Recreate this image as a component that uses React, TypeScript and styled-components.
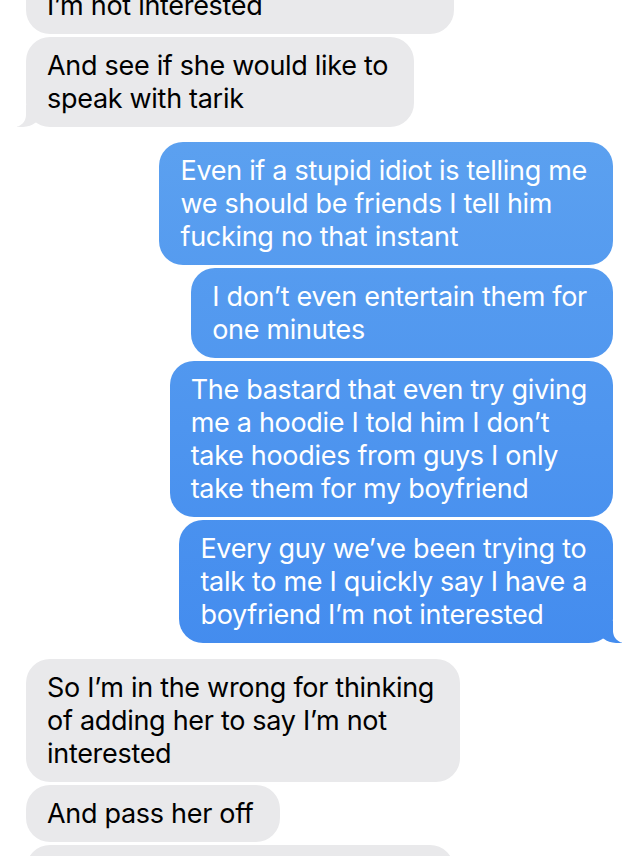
import React from "react";
import styled, { createGlobalStyle, css } from "styled-components";

const Global = createGlobalStyle`
  html, body { margin: 0; padding: 0; background: #ffffff; }
  body { font-family: Inter, "Noto Sans", Roboto, sans-serif; -webkit-font-smoothing: antialiased; }
`;

const Screen = styled.div`
  width: 640px;
  height: 856px;
  overflow: hidden;
  background: #ffffff;
`;

const Thread = styled.div`
  display: flex;
  flex-direction: column;
  margin-top: -23px;
  padding: 0 27px 0 26px;
`;

const blueFill = css`
  background: linear-gradient(to bottom, #62a6f0 0px, #3a84ee 856px);
  background-attachment: fixed;
`;

const Bubble = styled.div<{ $me?: boolean; $tail?: boolean; $gap?: number; $width?: number }>`
  position: relative;
  box-sizing: border-box;
  align-self: ${(p) => (p.$me ? "flex-end" : "flex-start")};
  margin-top: ${(p) => p.$gap ?? 3}px;
  ${(p) => (p.$width ? `width: ${p.$width}px;` : "")}
  padding: 12px 26px 12px 21px;
  border-radius: 24px;
  font-size: 27px;
  line-height: 33px;
  letter-spacing: -0.3px;
  color: ${(p) => (p.$me ? "#ffffff" : "#000000")};
  ${(p) => (p.$me ? blueFill : "background: #e9e9eb;")}

  ${(p) =>
    p.$tail &&
    (p.$me
      ? css`
          &::before {
            content: "";
            position: absolute;
            bottom: 0;
            right: -9px;
            width: 24px;
            height: 22px;
            ${blueFill}
            border-bottom-left-radius: 18px 15px;
          }
          &::after {
            content: "";
            position: absolute;
            bottom: 0;
            right: -30px;
            width: 30px;
            height: 24px;
            background: #ffffff;
            border-bottom-left-radius: 12px;
          }
        `
      : css`
          &::before {
            content: "";
            position: absolute;
            bottom: 0;
            left: -9px;
            width: 24px;
            height: 22px;
            background: #e9e9eb;
            border-bottom-right-radius: 18px 15px;
          }
          &::after {
            content: "";
            position: absolute;
            bottom: 0;
            left: -30px;
            width: 30px;
            height: 24px;
            background: #ffffff;
            border-bottom-right-radius: 12px;
          }
        `)}
`;

const Line = styled.span`
  display: block;
  white-space: nowrap;
  position: relative;
  z-index: 1;
`;

type Msg = { me?: boolean; tail?: boolean; gap?: number; width?: number; lines: string[] };

const messages: Msg[] = [
  { lines: ["I\u2019m not interested"], gap: 0, width: 428 },
  { lines: ["And see if she would like to", "speak with tarik"], tail: true },
  {
    me: true,
    gap: 15,
    lines: ["Even if a stupid idiot is telling me", "we should be friends I tell him", "fucking no that instant"],
  },
  { me: true, lines: ["I don\u2019t even entertain them for", "one minutes"] },
  {
    me: true,
    lines: [
      "The bastard that even try giving",
      "me a hoodie I told him I don\u2019t",
      "take hoodies from guys I only",
      "take them for my boyfriend",
    ],
  },
  {
    me: true,
    tail: true,
    lines: ["Every guy we\u2019ve been trying to", "talk to me I quickly say I have a", "boyfriend I\u2019m not interested"],
  },
  {
    gap: 16,
    lines: ["So I\u2019m in the wrong for thinking", "of adding her to say I\u2019m not", "interested"],
  },
  { lines: ["And pass her off"] },
  { lines: ["\u00a0", "\u00a0"], width: 428 },
];

export default function App() {
  return (
    <Screen>
      <Global />
      <Thread>
        {messages.map((m, i) => (
          <Bubble key={i} $me={m.me} $tail={m.tail} $gap={m.gap} $width={m.width}>
            {m.lines.map((l, j) => (
              <Line key={j}>{l}</Line>
            ))}
          </Bubble>
        ))}
      </Thread>
    </Screen>
  );
}
